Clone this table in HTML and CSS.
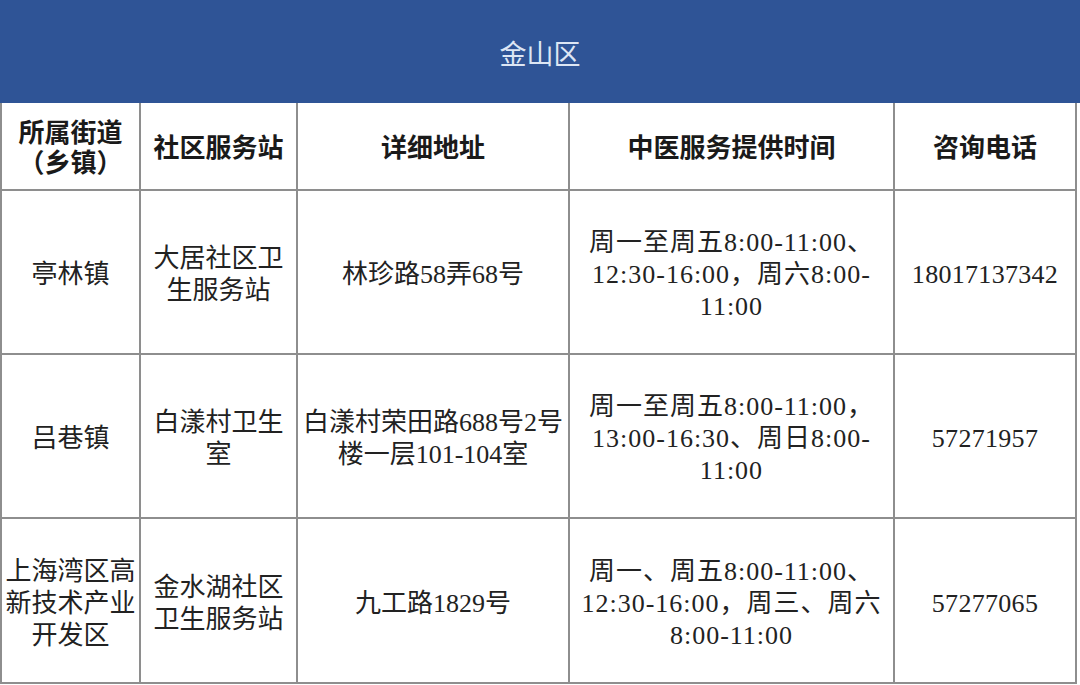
FILE: index.html
```html
<!DOCTYPE html>
<html lang="zh-CN">
<head>
<meta charset="utf-8">
<title>金山区</title>
<link rel="stylesheet" href="styles.css">
</head>
<body>
<div class="page">
  <div class="band">金山区</div>
  <div class="grid">
    <div class="cell head">所属街道<br>（乡镇）</div>
    <div class="cell head">社区服务站</div>
    <div class="cell head">详细地址</div>
    <div class="cell head">中医服务提供时间</div>
    <div class="cell head">咨询电话</div>

    <div class="cell">亭林镇</div>
    <div class="cell">大居社区卫<br>生服务站</div>
    <div class="cell">林珍路58弄68号</div>
    <div class="cell time">周一至周五8:00-11:00、<br>12:30-16:00，周六8:00-<br>11:00</div>
    <div class="cell phone">18017137342</div>

    <div class="cell">吕巷镇</div>
    <div class="cell">白漾村卫生<br>室</div>
    <div class="cell">白漾村荣田路688号2号<br>楼一层101-104室</div>
    <div class="cell time">周一至周五8:00-11:00，<br>13:00-16:30、周日8:00-<br>11:00</div>
    <div class="cell phone">57271957</div>

    <div class="cell">上海湾区高<br>新技术产业<br>开发区</div>
    <div class="cell">金水湖社区<br>卫生服务站</div>
    <div class="cell">九工路1829号</div>
    <div class="cell time">周一、周五8:00-11:00、<br>12:30-16:00，周三、周六<br>8:00-11:00</div>
    <div class="cell phone">57277065</div>
  </div>
</div>
</body>
</html>
```

FILE: styles.css
```css
html, body {
  margin: 0;
  padding: 0;
  background: #ffffff;
}

.page {
  width: 1080px;
  height: 685px;
  overflow: hidden;
  font-family: "Liberation Serif", "Noto Sans CJK SC", serif;
}

.band {
  height: 103px;
  background: #2f5496;
  color: #dde6f4;
  font-family: "Noto Sans CJK SC", sans-serif;
  font-size: 27px;
  display: flex;
  align-items: center;
  justify-content: center;
  padding-top: 2px;
  box-sizing: border-box;
}

.grid {
  width: 1077px;
  box-sizing: border-box;
  display: grid;
  grid-template-columns: 137px 155px 270px 323px 180px;
  grid-template-rows: 86px 162px 162px 163px;
  gap: 2px;
  padding: 0 2px 2px 2px;
  background: #8e8e8e;
}

.cell {
  background: #ffffff;
  display: flex;
  align-items: center;
  justify-content: center;
  text-align: center;
  font-size: 26px;
  line-height: 32px;
  color: #222222;
  padding: 6px 2px 0 2px;
}

.head {
  font-weight: bold;
  line-height: 30px;
  color: #1a1a1a;
}

.time {
  letter-spacing: 1px;
}

.phone {
  letter-spacing: 0.3px;
}
```
